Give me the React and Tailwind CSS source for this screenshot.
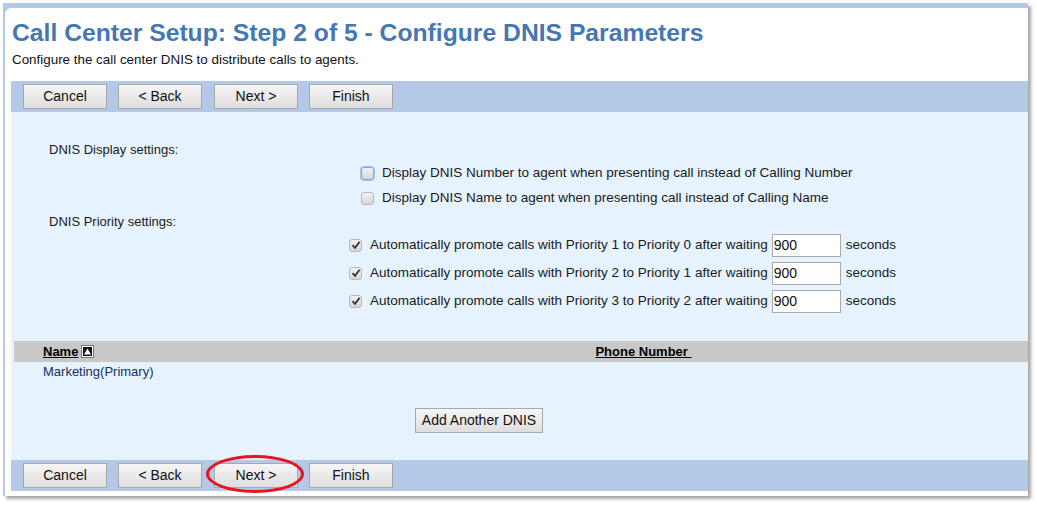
import React from 'react';

const font = { fontFamily: '"Liberation Sans", Arial, sans-serif' };

const Btn = ({ children, className = '' }) => (
  <button
    type="button"
    className={`h-[25px] border border-[#a9a9a9] bg-gradient-to-b from-[#f6f6f6] to-[#dedede] text-[14px] text-[#111] ${className}`}
  >
    {children}
  </button>
);

const Toolbar = ({ circled }) => (
  <div className="flex h-[31px] items-center gap-[11px] bg-[#b4c8e8] pl-[12px]">
    <Btn className="w-[84px]">Cancel</Btn>
    <Btn className="w-[84px]">&lt; Back</Btn>
    <div className="relative ml-[1px]">
      <Btn className="w-[84px]">Next &gt;</Btn>
      {circled && (
        <span className="pointer-events-none absolute left-[-8px] top-[-8px] h-[38px] w-[98px] rounded-[50%] border-[3px] border-[#e8141c]" />
      )}
    </div>
    <Btn className="w-[84px]">Finish</Btn>
  </div>
);

const Check = ({ checked, focused }) => (
  <span
    className={`flex h-[13px] w-[13px] shrink-0 items-center justify-center rounded-[3px] border bg-gradient-to-b from-[#f2f2f2] to-[#d6d6d6] ${
      focused ? 'border-[#7ea6e6] shadow-[0_0_0_1px_#a9c6f2]' : 'border-[#b9b9b9]'
    }`}
  >
    {checked && (
      <svg width="10" height="10" viewBox="0 0 10 10">
        <path d="M1.5 5.2 L4 7.8 L8.6 1.8" fill="none" stroke="#333" strokeWidth="1.8" />
      </svg>
    )}
  </span>
);

const PriorityRow = ({ from, to }) => (
  <div className="ml-[338px] flex h-[28px] items-center">
    <Check checked />
    <span className="ml-[8px]">
      Automatically promote calls with Priority {from} to Priority {to} after waiting
    </span>
    <input
      readOnly
      value="900"
      className="ml-[4px] h-[23px] w-[69px] border border-[#a9a9a9] bg-white px-[1px] text-[14px] text-[#111] outline-none"
    />
    <span className="ml-[5px]">seconds</span>
  </div>
);

export default function App() {
  return (
    <div className="min-h-[506px] bg-white pl-[3px] pt-[3px]" style={font}>
      <div className="w-[1025px] bg-[#b4c8e8] pl-[2px] pt-[5px] shadow-[3px_3px_3px_rgba(0,0,0,0.35)]">
        <div className="rounded-tl-[6px] bg-white pb-[5px] pl-[6px]">
          <div className="h-[73px] pl-[1px]">
            <h1 className="pt-[7px] text-[24.7px] font-bold leading-[36px] text-[#4577b3]">
              Call Center Setup: Step 2 of 5 - Configure DNIS Parameters
            </h1>
            <p className="mt-[1px] text-[13.4px] leading-[16px] text-[#111]">
              Configure the call center DNIS to distribute calls to agents.
            </p>
          </div>
          <Toolbar />
          <div className="h-[348px] bg-[#e6f3fe] text-[13.5px] text-[#1a1a1a]">
            <div className="pl-[38px] pt-[29px] text-[13px] leading-[18px]">DNIS Display settings:</div>
            <div className="ml-[350px] mt-[2px] flex h-[25px] items-center">
              <Check focused />
              <span className="ml-[8px]">
                Display DNIS Number to agent when presenting call instead of Calling Number
              </span>
            </div>
            <div className="ml-[350px] flex h-[25px] items-center">
              <Check />
              <span className="ml-[8px]">
                Display DNIS Name to agent when presenting call instead of Calling Name
              </span>
            </div>
            <div className="pl-[38px] text-[13px] leading-[21px]">DNIS Priority settings:</div>
            <div className="-mt-[1px]">
              <PriorityRow from={1} to={0} />
              <PriorityRow from={2} to={1} />
              <PriorityRow from={3} to={2} />
            </div>
            <div className="ml-[3px] mt-[26px] flex h-[21px] items-center bg-[#c8c8c8] text-[13px] font-bold text-black">
              <span className="ml-[29px] flex items-center underline">
                <span>Name</span>
                <span className="ml-[3px] flex h-[13px] w-[13px] items-center justify-center border border-[#777] bg-white">
                  <svg width="9" height="9" viewBox="0 0 9 9">
                    <rect width="9" height="9" fill="#111" />
                    <path d="M4.5 1.5 L8 7.5 L1 7.5 Z" fill="#fff" />
                  </svg>
                </span>
              </span>
              <span className="ml-[501px] underline">Phone Number&nbsp;</span>
            </div>
            <div className="pl-[32px] text-[13px] leading-[20px] text-[#17305e]">Marketing(Primary)</div>
            <div className="mt-[26px] flex">
              <Btn className="ml-[404px] w-[128px]">Add Another DNIS</Btn>
            </div>
          </div>
          <Toolbar circled />
        </div>
      </div>
    </div>
  );
}
